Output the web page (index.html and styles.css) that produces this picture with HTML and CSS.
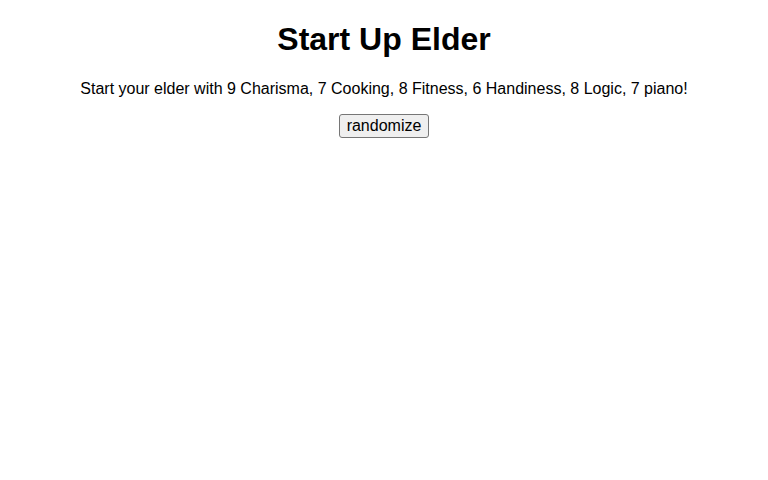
FILE: index.html
```html
<!DOCTYPE html>
<html lang="en">
<head>
  <meta charset="UTF-8" />
  <title>Start Up Elder</title>
  <link rel="stylesheet" href="styles.css">
</head>
<body>
  <h1>Start Up Elder</h1>
  <p id="result">Start your elder with 9 Charisma, 7 Cooking, 8 Fitness, 6 Handiness, 8 Logic, 7 piano!</p>
  <button id="randomBtn" class="random-btn">randomize</button>
</body>
</html>
```
FILE: styles.css
```css
body {
  font-family: 'Liberation Sans', Arial, sans-serif;
  text-align: center;
  margin: 0 8px;
}
.random-btn {
  font-family: 'Liberation Sans', Arial, sans-serif;
  font-size: 16px;
  padding: 2px 7px;
  background-color: #efefef;
  border: 1px solid #767676;
  border-radius: 3px;
  color: #000;
}
```
